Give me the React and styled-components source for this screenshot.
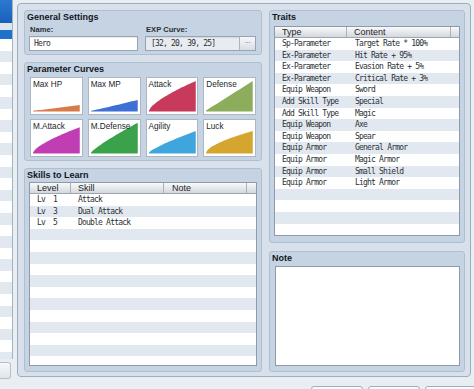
import React from "react";
import styled, { createGlobalStyle } from "styled-components";

const Global = createGlobalStyle`
  *, *::before, *::after { box-sizing: border-box; }
  html, body { margin: 0; padding: 0; }
  body { background: #e9eef3; font-family: "Liberation Sans", Arial, sans-serif; }
`;

const Screen = styled.div`
  width: 474px;
  height: 389px;
  overflow: hidden;
  display: flex;
  background: #e9eef3;
`;

const SidePane = styled.div`
  width: 13px;
  flex: none;
  display: flex;
  flex-direction: column;
`;

const SideList = styled.div`
  height: 359px;
  display: flex;
  flex-direction: column;
  overflow: hidden;
  background: #fff;
  border-right: 1px solid #a4b2c1;
`;

const SideTab = styled.div`
  height: 23px;
  flex: none;
  background: linear-gradient(#2b79d3, #1a60ba);
`;

const SideGap = styled.div`
  height: 7px;
  flex: none;
  background: #dde5ed;
`;

const SideRow = styled.div`
  height: ${(p) => (p.$selected ? "9px" : "11.6px")};
  flex: none;
  background: ${(p) => (p.$selected ? "#2171cc" : p.$alt ? "#e2e8ef" : "#ffffff")};
`;

const SideButton = styled.div`
  margin-top: 3px;
  width: 11px;
  height: 17px;
  border: 1px solid #b4bfcb;
  border-left: none;
  border-radius: 0 3px 3px 0;
  background: linear-gradient(#f7f9fb, #dfe5eb);
`;

const MainCol = styled.div`
  margin-left: 4px;
  width: 454px;
  flex: none;
  display: flex;
  flex-direction: column;
  padding-top: 3px;
`;

const Frame = styled.div`
  height: 374px;
  border: 1px solid #9eadbd;
  border-radius: 4px;
  background: #d8e1eb;
  padding: 6px 5px 4px 6px;
  display: grid;
  grid-template-columns: 238px 196px;
  column-gap: 7px;
`;

const Column = styled.div`
  display: flex;
  flex-direction: column;
  gap: ${(p) => p.$gap}px;
  min-height: 0;
`;

const Group = styled.section`
  display: flex;
  flex-direction: column;
  background: #c5d3e3;
  border: 1px solid #b0bfcf;
  border-radius: 3px;
  height: ${(p) => (p.$h ? `${p.$h}px` : "auto")};
  flex: ${(p) => (p.$h ? "none" : "1")};
  min-height: 0;
`;

const GroupTitle = styled.h3`
  margin: 0;
  height: 13px;
  line-height: 13px;
  padding-left: 2px;
  font-size: 9px;
  font-weight: bold;
  color: #11161c;
  flex: none;
`;

const GroupBody = styled.div`
  flex: 1;
  min-height: 0;
  display: flex;
  flex-direction: column;
  padding: ${(p) => p.$pad};
`;

const FieldGrid = styled.div`
  display: grid;
  grid-template-columns: 109px 1fr;
  grid-template-rows: 11px 15px;
  column-gap: 7px;
  row-gap: 1px;
`;

const FieldLabel = styled.label`
  font-size: 7.6px;
  font-weight: bold;
  line-height: 11px;
  color: #2a2f36;
  padding-left: ${(p) => p.$indent || 0}px;
`;

const InputBox = styled.div`
  display: flex;
  align-items: stretch;
  height: 15px;
  border: 1px solid #96a4b4;
  background: ${(p) => (p.$readonly ? "#e8ecf1" : "#ffffff")};
  box-shadow: inset 0 1px 1px rgba(0, 0, 0, 0.08);
`;

const InputText = styled.span`
  flex: 1;
  padding-left: ${(p) => p.$pad || 4}px;
  font-family: "DejaVu Sans Mono", "Liberation Mono", monospace;
  font-size: 8px;
  letter-spacing: -0.8px;
  line-height: 13px;
  color: #2b2f35;
  white-space: pre;
`;

const DotsButton = styled.span`
  width: 16px;
  flex: none;
  border-left: 1px solid #aab5c1;
  background: linear-gradient(#f6f7f9, #d9dee4);
  font-size: 7px;
  line-height: 11px;
  text-align: center;
  color: #555;
  letter-spacing: -0.5px;
`;

const CardGrid = styled.div`
  display: grid;
  grid-template-columns: repeat(4, 1fr);
  grid-auto-rows: 38px;
  column-gap: 5px;
  row-gap: 4px;
`;

const Card = styled.div`
  display: grid;
  border: 1px solid #acb7c3;
  background: #ffffff;
  overflow: hidden;
`;

const CardLabel = styled.span`
  grid-area: 1 / 1;
  align-self: start;
  z-index: 1;
  padding: 2px 0 0 2px;
  font-size: 8.2px;
  line-height: 10px;
  color: #22262b;
  white-space: nowrap;
`;

const CurveSvg = styled.svg`
  grid-area: 1 / 1;
  width: 100%;
  height: 100%;
  display: block;
`;

const Table = styled.div`
  flex: 1;
  min-height: 0;
  display: flex;
  flex-direction: column;
  border: 1px solid #8c9aaa;
  background: #ffffff;
  overflow: hidden;
`;

const THead = styled.div`
  flex: none;
  display: grid;
  grid-template-columns: ${(p) => p.$cols};
  height: 11px;
  background: linear-gradient(#f8f9fa, #d4d8dd);
  border-bottom: 1px solid #9ea7b1;
`;

const TH = styled.div`
  padding-left: ${(p) => p.$pl || 7}px;
  font-size: 9px;
  line-height: 10px;
  color: #1e2227;
  border-right: 1px solid #a9b1ba;
  white-space: nowrap;
  overflow: hidden;
  &:last-child { border-right: none; }
`;

const TBody = styled.div`
  flex: 1;
  min-height: 0;
  overflow: hidden;
`;

const TR = styled.div`
  display: grid;
  grid-template-columns: ${(p) => p.$cols};
  height: 11.6px;
  background: ${(p) => (p.$alt ? "#e2e8ef" : "#ffffff")};
`;

const TD = styled.div`
  padding-left: ${(p) => p.$pl || 7}px;
  font-family: "DejaVu Sans Mono", "Liberation Mono", monospace;
  font-size: 8px;
  letter-spacing: -0.8px;
  line-height: 11.6px;
  color: #2c3036;
  white-space: pre;
  overflow: hidden;
`;

const NoteArea = styled.div`
  flex: 1;
  border: 1px solid #8c9aaa;
  background: #ffffff;
`;

const ButtonRow = styled.div`
  display: flex;
  gap: 5px;
  padding: 9px 0 0 294px;
`;

const Button = styled.button`
  width: 52px;
  height: 22px;
  flex: none;
  border: 1px solid #a2adba;
  border-radius: 3px;
  background: linear-gradient(#fbfcfd, #dde3e9);
  padding: 0;
`;

const curves = [
  { name: "Max HP", color: "#d97a4b", s: 0.02, e: 0.2, p: 1 },
  { name: "Max MP", color: "#3e6fd6", s: 0.02, e: 0.36, p: 1.05 },
  { name: "Attack", color: "#c73a5b", s: 0.03, e: 0.95, p: 0.7 },
  { name: "Defense", color: "#8cad5b", s: 0.03, e: 0.95, p: 1 },
  { name: "M.Attack", color: "#c03db3", s: 0.03, e: 0.82, p: 0.7 },
  { name: "M.Defense", color: "#39a24a", s: 0.03, e: 0.96, p: 0.85 },
  { name: "Agility", color: "#3fa6dd", s: 0.03, e: 0.7, p: 0.8 },
  { name: "Luck", color: "#d5a62f", s: 0.03, e: 0.7, p: 0.62 },
];

function curvePath({ s, e, p }) {
  const pts = [];
  for (let i = 0; i <= 24; i++) {
    const t = i / 24;
    const x = 4 + 92 * t;
    const y = 93 - (s + (e - s) * Math.pow(t, p)) * 89;
    pts.push(`${x.toFixed(2)},${y.toFixed(2)}`);
  }
  return `M4,93 L${pts.join(" L")} L96,93 Z`;
}

const traits = [
  ["Sp-Parameter", "Target Rate * 100%"],
  ["Ex-Parameter", "Hit Rate + 95%"],
  ["Ex-Parameter", "Evasion Rate + 5%"],
  ["Ex-Parameter", "Critical Rate + 3%"],
  ["Equip Weapon", "Sword"],
  ["Add Skill Type", "Special"],
  ["Add Skill Type", "Magic"],
  ["Equip Weapon", "Axe"],
  ["Equip Weapon", "Spear"],
  ["Equip Armor", "General Armor"],
  ["Equip Armor", "Magic Armor"],
  ["Equip Armor", "Small Shield"],
  ["Equip Armor", "Light Armor"],
];

const skills = [
  ["Lv  1", "Attack"],
  ["Lv  3", "Dual Attack"],
  ["Lv  5", "Double Attack"],
];

const traitCols = "72px 104px 1fr";
const skillCols = "41px 93px 83px 1fr";

export default function App() {
  const traitRows = Array.from({ length: 18 }, (_, i) => traits[i] || ["", ""]);
  const skillRows = Array.from({ length: 16 }, (_, i) => skills[i] || ["", ""]);
  const sideRows = Array.from({ length: 30 }, (_, i) => i);

  return (
    <>
      <Global />
      <Screen>
        <SidePane>
          <SideList>
            <SideTab />
            <SideGap />
            <SideRow $selected />
            {sideRows.map((i) => (
              <SideRow key={i} $alt={i % 2 === 1} />
            ))}
          </SideList>
          <SideButton />
        </SidePane>

        <MainCol>
          <Frame>
            <Column $gap={7}>
              <Group $h={45}>
                <GroupTitle>General Settings</GroupTitle>
                <GroupBody $pad="0 5px 3px 4px">
                  <FieldGrid>
                    <FieldLabel $indent={1}>Name:</FieldLabel>
                    <FieldLabel $indent={1}>EXP Curve:</FieldLabel>
                    <InputBox>
                      <InputText $pad={4}>Hero</InputText>
                    </InputBox>
                    <InputBox $readonly>
                      <InputText $pad={5}>[32, 20, 39, 25]</InputText>
                      <DotsButton>···</DotsButton>
                    </InputBox>
                  </FieldGrid>
                </GroupBody>
              </Group>

              <Group $h={99}>
                <GroupTitle>Parameter Curves</GroupTitle>
                <GroupBody $pad="1px 5px 3px 5px">
                  <CardGrid>
                    {curves.map((c) => (
                      <Card key={c.name}>
                        <CardLabel>{c.name}</CardLabel>
                        <CurveSvg viewBox="0 0 100 100" preserveAspectRatio="none">
                          <path d={curvePath(c)} fill={c.color} />
                        </CurveSvg>
                      </Card>
                    ))}
                  </CardGrid>
                </GroupBody>
              </Group>

              <Group>
                <GroupTitle>Skills to Learn</GroupTitle>
                <GroupBody $pad="0 4px 5px 4px">
                  <Table>
                    <THead $cols={skillCols}>
                      <TH>Level</TH>
                      <TH>Skill</TH>
                      <TH $pl={8}>Note</TH>
                      <TH />
                    </THead>
                    <TBody>
                      {skillRows.map((r, i) => (
                        <TR key={i} $cols={skillCols} $alt={i % 2 === 1}>
                          <TD>{r[0]}</TD>
                          <TD>{r[1]}</TD>
                          <TD />
                          <TD />
                        </TR>
                      ))}
                    </TBody>
                  </Table>
                </GroupBody>
              </Group>
            </Column>

            <Column $gap={8}>
              <Group $h={233}>
                <GroupTitle>Traits</GroupTitle>
                <GroupBody $pad="2px 4px 6px 4px">
                  <Table>
                    <THead $cols={traitCols}>
                      <TH>Type</TH>
                      <TH>Content</TH>
                      <TH />
                    </THead>
                    <TBody>
                      {traitRows.map((r, i) => (
                        <TR key={i} $cols={traitCols} $alt={i % 2 === 1}>
                          <TD>{r[0]}</TD>
                          <TD $pl={8}>{r[1]}</TD>
                          <TD />
                        </TR>
                      ))}
                    </TBody>
                  </Table>
                </GroupBody>
              </Group>

              <Group>
                <GroupTitle>Note</GroupTitle>
                <GroupBody $pad="1px 4px 5px 5px">
                  <NoteArea />
                </GroupBody>
              </Group>
            </Column>
          </Frame>

          <ButtonRow>
            <Button aria-label="OK" />
            <Button aria-label="Cancel" />
            <Button aria-label="Apply" />
          </ButtonRow>
        </MainCol>
      </Screen>
    </>
  );
}
